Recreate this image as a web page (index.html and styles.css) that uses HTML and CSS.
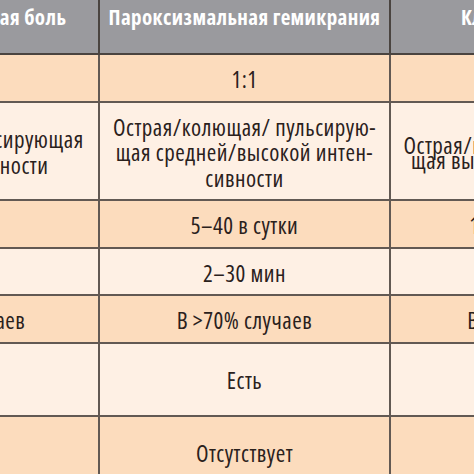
FILE: index.html
```html
<!DOCTYPE html>
<html lang="ru">
<head>
<meta charset="utf-8">
<link rel="stylesheet" href="styles.css">
</head>
<body>
<div class="frame">
<table class="tbl">
<colgroup><col class="c1"><col class="c2"><col class="c3"></colgroup>
<thead>
<tr><th>Краткосрочная боль</th><th>Пароксизмальная гемикрания</th><th>Кластерная боль</th></tr>
</thead>
<tbody>
<tr class="pk"><td>3:1</td><td>1:1</td><td>2:1</td></tr>
<tr class="lt"><td>Давящая/пульсирующая<br>и интенсивности</td><td>Острая/колющая/ пульсирую-<br>щая средней/высокой интен-<br>сивности</td><td class="tight">Острая/колющая/ пульсирую-<br>щая высокой интенсивности</td></tr>
<tr class="pk"><td>1–8</td><td>5–40 в сутки</td><td>1–8 раз в сутки</td></tr>
<tr class="lt"><td>15</td><td>2–30 мин</td><td>15–180 мин</td></tr>
<tr class="pk"><td>5% случаев</td><td>В &gt;70% случаев</td><td>В 100% случаев</td></tr>
<tr class="lt"><td>Нет<br>да</td><td>Есть</td><td>Нет</td></tr>
<tr class="pk"><td>Нет<br>да</td><td>Отсутствует</td><td>Есть</td></tr>
</tbody>
</table>
</div>
</body>
</html>
```
FILE: styles.css
```css
html, body {
  margin: 0;
  padding: 0;
  background: #fef0e4;
}
body {
  width: 474px;
  height: 474px;
  overflow: hidden;
}
.frame {
  margin-left: -148px;
}
.tbl {
  table-layout: fixed;
  width: 827px;
  border-collapse: collapse;
  font-family: "Open Sans", sans-serif;
  font-stretch: 75%;
  font-size: 23px;
  letter-spacing: 0.5px;
  color: #2a211c;
}
.c1 { width: 246px; }
.c2 { width: 291px; }
.c3 { width: 290px; }
.tbl th {
  background: #9a9a9e;
  color: #ffffff;
  font-weight: bold;
  font-size: 21px;
  letter-spacing: 0.4px;
  line-height: 26px;
  padding: 4px 6px 23px;
  vertical-align: top;
  white-space: nowrap;
  border-left: 2px solid #4a4440;
  border-right: 2px solid #4a4440;
  border-bottom: 2px solid #4a4440;
}
.tbl td {
  text-align: center;
  vertical-align: middle;
  line-height: 25.5px;
  padding: 12px 6px 8px;
  white-space: nowrap;
  border: 2px solid #625953;
}
.tbl td.tight {
  line-height: 15px;
}
.pk td { background: #fcdcbd; }
.lt td { background: #fef0e4; }
```
